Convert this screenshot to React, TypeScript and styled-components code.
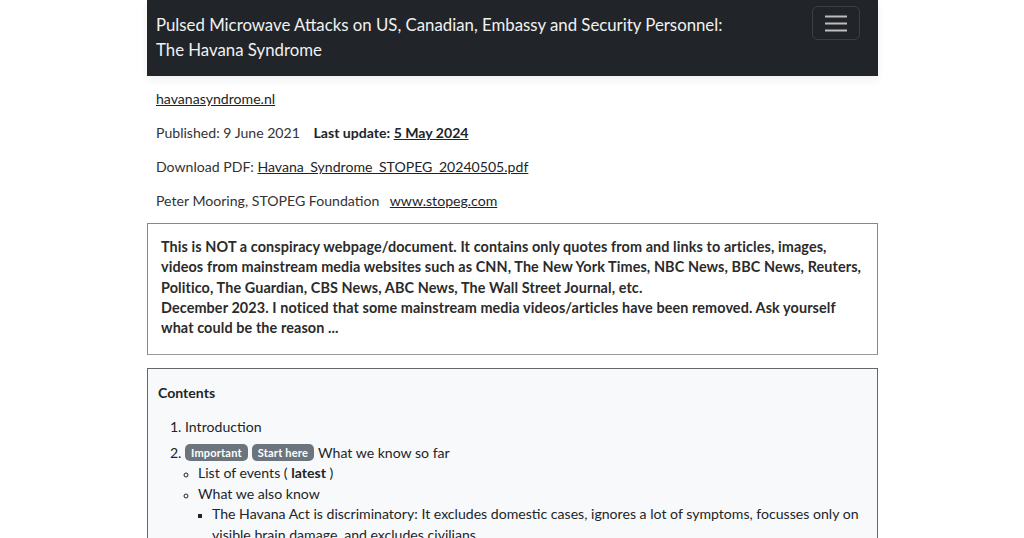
import React from 'react'
import styled, { createGlobalStyle } from 'styled-components'

const GlobalStyle = createGlobalStyle`
  html, body { margin: 0; padding: 0; background: #fff; }
  body {
    font-family: "Lato", "Liberation Sans", sans-serif;
    color: #212529;
    font-size: 14.1px;
  }
`

const Page = styled.div`
  width: 731px;
  margin: 0 auto;
  padding-left: 1px;
`

const Navbar = styled.nav`
  background: #212529;
  height: 76px;
  display: flex;
  align-items: center;
  justify-content: space-between;
  padding: 0 18px 0 9px;
  box-shadow: 0 4px 8px rgba(0, 0, 0, 0.06);
`

const Brand = styled.a`
  color: #f1f1f1;
  font-size: 16.8px;
  line-height: 25px;
  text-decoration: none;
  margin-top: -3px;
`

const Toggler = styled.button`
  width: 48px;
  height: 34px;
  border: 1px solid rgba(255, 255, 255, 0.12);
  border-radius: 6px;
  background: transparent;
  display: flex;
  align-items: center;
  justify-content: center;
  align-self: flex-start;
  margin-top: 6px;
  padding: 0;
`

const Meta = styled.div`
  padding: 12px 9px 0;
  & > p:last-child { margin-bottom: 12px; }
`

const MetaLine = styled.p`
  margin: 0 0 13px;
  line-height: 21px;
  color: #333;
  a { color: #212529; text-decoration: underline; }
`

const Strong = styled.b`
  margin-left: 10px;
  color: #212529;
`

const Notice = styled.div`
  border: 1px solid #888;
  border-bottom-color: #999;
  padding: 13px 13px 16px;
  font-weight: 700;
  font-size: 14.4px;
  letter-spacing: 0.1px;
  line-height: 20.3px;
  color: #2b2b2b;
  white-space: nowrap;
`

const Contents = styled.div`
  margin-top: 13px;
  background: #f8f9fa;
  border: 1px solid #666;
  padding: 14px 10px 20px;
  height: 200px;
`

const ContentsTitle = styled.div`
  font-weight: 700;
  line-height: 20px;
  margin-bottom: 14px;
`

const OList = styled.ol`
  margin: 0;
  padding-left: 27px;
  line-height: 20.4px;
  & > li { margin-bottom: 5px; }
`

const UList = styled.ul<{ $square?: boolean }>`
  margin: 0;
  padding-left: ${p => (p.$square ? '14px' : '13px')};
  list-style-type: ${p => (p.$square ? 'square' : 'circle')};
  li::marker { font-size: 11px; }
`

const Badge = styled.span`
  display: inline-block;
  background: #6c757d;
  color: #fff;
  font-size: 11px;
  font-weight: 700;
  letter-spacing: 0.2px;
  line-height: 17px;
  padding: 0 6px;
  border-radius: 5px;
  margin-right: 4px;
  vertical-align: 1px;
`

export default function App() {
  return (
    <>
      <GlobalStyle />
      <Page>
        <Navbar>
          <Brand href="#">
            Pulsed Microwave Attacks on US, Canadian, Embassy and Security Personnel:
            <br />
            The Havana Syndrome
          </Brand>
          <Toggler aria-label="menu">
            <svg width="22" height="17" viewBox="0 0 22 17">
              <path d="M0 1.5h22M0 8.5h22M0 15.5h22" stroke="#bdbdbd" strokeWidth="2" />
            </svg>
          </Toggler>
        </Navbar>
        <Meta>
          <MetaLine><a href="#">havanasyndrome.nl</a></MetaLine>
          <MetaLine>
            Published: 9 June 2021 <Strong>Last update: <a href="#">5 May 2024</a></Strong>
          </MetaLine>
          <MetaLine>
            Download PDF: <a href="#">Havana_Syndrome_STOPEG_20240505.pdf</a>
          </MetaLine>
          <MetaLine>
            Peter Mooring, STOPEG Foundation&nbsp;&nbsp; <a href="#">www.stopeg.com</a>
          </MetaLine>
        </Meta>
        <Notice>
          This is NOT a conspiracy webpage/document. It contains only quotes from and links to articles, images,
          <br />
          videos from mainstream media websites such as CNN, The New York Times, NBC News, BBC News, Reuters,
          <br />
          Politico, The Guardian, CBS News, ABC News, The Wall Street Journal, etc.
          <br />
          December 2023. I noticed that some mainstream media videos/articles have been removed. Ask yourself
          <br />
          what could be the reason ...
        </Notice>
        <Contents>
          <ContentsTitle>Contents</ContentsTitle>
          <OList>
            <li>Introduction</li>
            <li>
              <Badge>Important</Badge>
              <Badge>Start here</Badge>
              What we know so far
              <UList>
                <li>List of events ( <b>latest</b> )</li>
                <li>
                  What we also know
                  <UList $square>
                    <li>
                      The Havana Act is discriminatory: It excludes domestic cases, ignores a lot of symptoms, focusses only on
                      visible brain damage, and excludes civilians
                    </li>
                  </UList>
                </li>
              </UList>
            </li>
          </OList>
        </Contents>
      </Page>
    </>
  )
}
